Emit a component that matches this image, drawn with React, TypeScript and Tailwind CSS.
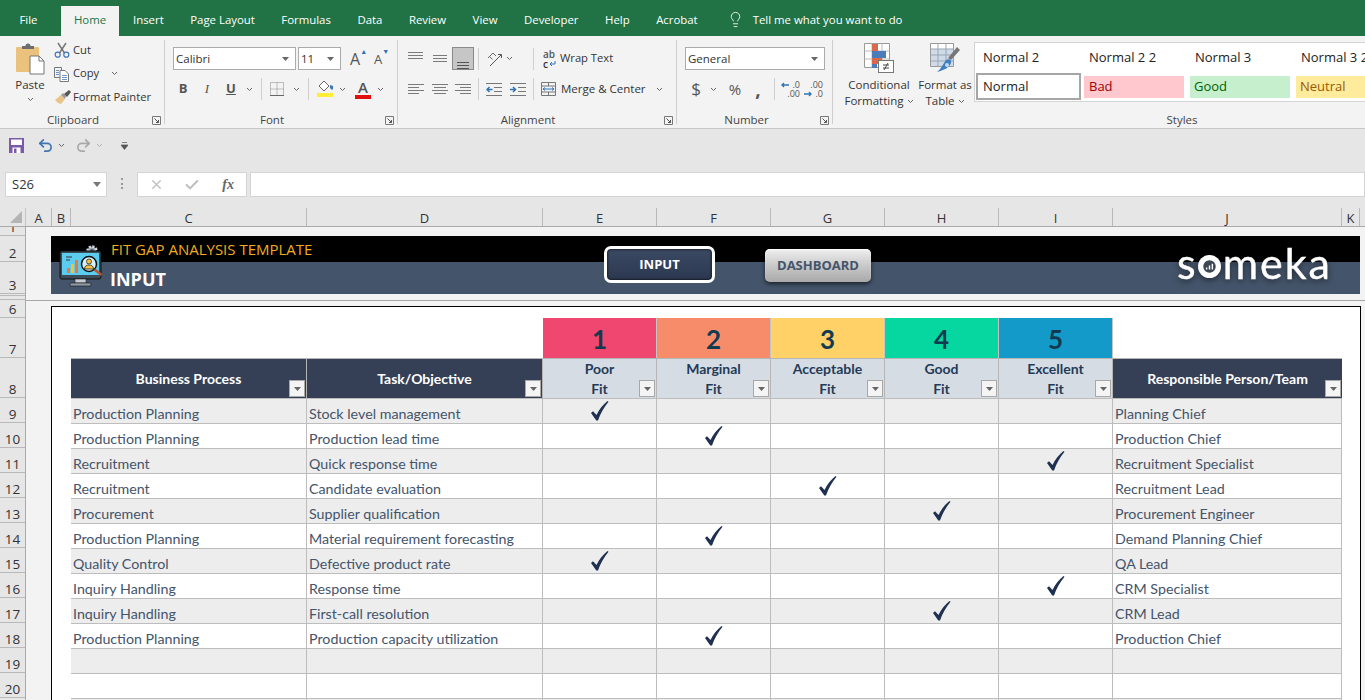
import React from "react";
import { Lightbulb, Undo2, Redo2, X, Check } from "lucide-react";

const tabs = ["Insert", "Page Layout", "Formulas", "Data", "Review", "View", "Developer", "Help", "Acrobat"];

const columns = [
  { name: "A", w: "w-[26px]" },
  { name: "B", w: "w-[19px]" },
  { name: "C", w: "w-[236px]" },
  { name: "D", w: "w-[236px]" },
  { name: "E", w: "w-[114px]" },
  { name: "F", w: "w-[114px]" },
  { name: "G", w: "w-[114px]" },
  { name: "H", w: "w-[114px]" },
  { name: "I", w: "w-[114px]" },
  { name: "J", w: "w-[229px]" },
  { name: "K", w: "w-[18px]" },
];

const tasks = [
  ["Production Planning", "Stock level management", 1, "Planning Chief"],
  ["Production Planning", "Production lead time", 2, "Production Chief"],
  ["Recruitment", "Quick response time", 5, "Recruitment Specialist"],
  ["Recruitment", "Candidate evaluation", 3, "Recruitment Lead"],
  ["Procurement", "Supplier qualification", 4, "Procurement Engineer"],
  ["Production Planning", "Material requirement forecasting", 2, "Demand Planning Chief"],
  ["Quality Control", "Defective product rate", 1, "QA Lead"],
  ["Inquiry Handling", "Response time", 5, "CRM Specialist"],
  ["Inquiry Handling", "First-call resolution", 4, "CRM Lead"],
  ["Production Planning", "Production capacity utilization", 2, "Production Chief"],
  ["", "", 0, ""],
  ["", "", 0, ""],
  ["", "", 0, ""],
] as const;

const fits = [
  { n: 1, top: "Poor", bg: "bg-[#ef476f]" },
  { n: 2, top: "Marginal", bg: "bg-[#f78c6b]" },
  { n: 3, top: "Acceptable", bg: "bg-[#ffd166]" },
  { n: 4, top: "Good", bg: "bg-[#06d6a0]" },
  { n: 5, top: "Excellent", bg: "bg-[#149ac9]" },
];

function Chevron({ className = "" }: { className?: string }) {
  return (
    <svg width="7" height="5" viewBox="0 0 7 5" className={"shrink-0 " + className}>
      <path d="M1 1l2.500 2.500L6 1" fill="none" stroke="#666" strokeWidth="1" />
    </svg>
  );
}

function Launcher() {
  return (
    <svg width="9" height="9" viewBox="0 0 9 9" className="absolute right-[3px] bottom-[3px]">
      <path d="M.5 8V.5H8.500V8.500H.5" fill="none" stroke="#777" />
      <path d="M2.500 2.500L6.500 6.500M6.500 4v2.500H4" fill="none" stroke="#555" />
    </svg>
  );
}

function Sep({ h = "h-[22px]" }: { h?: string }) {
  return <div className={"w-px shrink-0 bg-[#cfcfcf] " + h} />;
}

function Lines({ rows, active = false }: { rows: [number, number, number][]; active?: boolean }) {
  return (
    <svg width="16" height="14" viewBox="0 0 16 14">
      {rows.map(([a, b, y], i) => (
        <line key={i} x1={a} x2={b} y1={y + 0.5} y2={y + 0.5} stroke={active ? "#555" : "#7a7a7a"} />
      ))}
    </svg>
  );
}

function Select({ value, w }: { value: string; w: string }) {
  return (
    <div className={"flex h-[23px] items-center justify-between border border-[#ababab] bg-white pl-[2px] pr-[6px] text-[11.500px] text-[#333] " + w}>
      <span>{value}</span>
      <svg width="7" height="4" viewBox="0 0 7 4">
        <path d="M0 0h7L3.500 4z" fill="#666" />
      </svg>
    </div>
  );
}

function PasteIcon() {
  return (
    <svg width="30" height="32" viewBox="0 0 30 32">
      <rect x="1" y="4" width="23" height="25" rx="1" fill="#eac27e" />
      <path d="M7 5V3h3.500a2.500 2.500 0 015 0H19v3H7z" fill="#6d6d6d" />
      <path d="M15 13h9l5 5v13H15z" fill="#fff" stroke="#777" />
      <path d="M24 13v5h5" fill="none" stroke="#777" />
    </svg>
  );
}

function ScissorsIcon() {
  return (
    <svg width="16" height="16" viewBox="0 0 16 16">
      <path d="M4 1l6.500 10M12 1L5.500 11" stroke="#777" strokeWidth="1.500" fill="none" />
      <circle cx="3.700" cy="12.700" r="2.500" fill="none" stroke="#3f75b5" strokeWidth="1.200" />
      <circle cx="12.300" cy="12.700" r="2.500" fill="none" stroke="#3f75b5" strokeWidth="1.200" />
    </svg>
  );
}

function CopyIcon() {
  return (
    <svg width="16" height="16" viewBox="0 0 16 16" fill="none" stroke="#777">
      <path d="M.5 1.500h7v10h-7z" fill="#f3f3f3" />
      <path d="M6 4.500h5l3.500 3.500v7.500H6z" fill="#fff" />
      <path d="M2 4.500h3M2 6.500h3M2 8.500h3M8 9.500h5M8 11.500h5M8 13.500h5" stroke="#4a7ab5" strokeWidth=".8" />
    </svg>
  );
}

function BrushIcon() {
  return (
    <svg width="18" height="16" viewBox="0 0 18 16">
      <path d="M1 11l6-5 4 4-4 5-3-1z" fill="#e9c486" />
      <path d="M7 6l2-2 3 3-1 3z" fill="#999" />
      <path d="M10 5l5-4 2 2-4 5z" fill="#555" />
    </svg>
  );
}

function BordersIcon() {
  return (
    <svg width="14" height="14" viewBox="0 0 14 14" fill="none" stroke="#888" strokeDasharray="1 1">
      <path d="M.5.500h13v13H.5zM7 .5v13M.5 7h13" />
      <path d="M0 13.500h14" strokeDasharray="none" stroke="#666" />
    </svg>
  );
}

function FillIcon() {
  return (
    <svg width="17" height="18" viewBox="0 0 17 18">
      <path d="M7 1l5 5-5 5-5-5z" fill="#fff" stroke="#666" />
      <path d="M13 5l3 1v3l-1 1-2-2z" fill="#3f75b5" />
      <rect x="0" y="13" width="16" height="4" fill="#ffee33" />
    </svg>
  );
}

function OrientationIcon() {
  return (
    <svg width="16" height="16" viewBox="0 0 16 16" fill="none" stroke="#666">
      <path d="M2 7l5-5 3 3M3.500 5.500l3 3" />
      <path d="M4 15L15 4M12 3.500h3.500V7" stroke="#555" />
    </svg>
  );
}

function IndentIcon({ left = false }: { left?: boolean }) {
  return (
    <svg width="16" height="13" viewBox="0 0 16 13">
      <g stroke="#777">
        <line x1="0" x2="16" y1=".5" y2=".5" />
        <line x1="8" x2="16" y1="4.500" y2="4.500" />
        <line x1="8" x2="16" y1="8.500" y2="8.500" />
        <line x1="0" x2="16" y1="12.500" y2="12.500" />
      </g>
      <path d={left ? "M6.500 6.500H1M3.500 4L1 6.500 3.500 9" : "M0 6.500h5.500M3 4l2.500 2.500L3 9"} stroke="#2f73b7" strokeWidth="1.500" fill="none" />
    </svg>
  );
}

function WrapIcon() {
  return (
    <div className="relative flex h-[20px] w-[12px] flex-col text-[10px] font-semibold leading-[10px] text-[#555]">
      <span>ab</span>
      <span className="text-[#333]">c</span>
      <svg width="7" height="6" viewBox="0 0 7 6" className="absolute right-[-1px] bottom-[2px]">
        <path d="M6 0v3H1M3 1L1 3l2 2" fill="none" stroke="#2f73b7" />
      </svg>
    </div>
  );
}

function MergeIcon() {
  return (
    <svg width="15" height="14" viewBox="0 0 15 14" fill="none">
      <path d="M.5.500h14v13H.5zM.5 4h14M.5 10h14M7.500.5V4M7.500 10v4" stroke="#777" />
      <path d="M2 7h11M4 5.500L2 7l2 1.500M11 5.500L13 7l-2 1.500" stroke="#2f73b7" />
    </svg>
  );
}

function DecimalIcon({ top, bottom, up }: { top: string; bottom: string; up: boolean }) {
  return (
    <div className="relative flex h-[18px] w-[19px] flex-col items-end text-[9px] font-medium leading-[9px] text-[#555]">
      <span>{top}</span>
      <span>{bottom}</span>
      <svg width="8" height="6" viewBox="0 0 8 6" className={"absolute left-0 " + (up ? "top-[2px]" : "bottom-[1px]")}>
        <path d={up ? "M8 3H1M3 1L1 3l2 2" : "M0 3h7M5 1l2 2-2 2"} fill="none" stroke="#2f73b7" strokeWidth="1.300" />
      </svg>
    </div>
  );
}

function ConditionalIcon() {
  return (
    <svg width="30" height="30" viewBox="0 0 30 30">
      <path d="M.5.500h25v24H.5z" fill="#fff" stroke="#999" />
      <path d="M8 .5v24M18 .5v24M.5 8h25M.5 16h25" stroke="#bbb" />
      <rect x="8" y="1" width="6" height="7" fill="#d9694a" />
      <rect x="8" y="8" width="14" height="7" fill="#4a7db9" />
      <rect x="8" y="15" width="10" height="6" fill="#d9694a" />
      <rect x="8" y="21" width="5" height="4" fill="#4a7db9" />
      <rect x="14.500" y="17.500" width="15" height="12" fill="#fff" stroke="#777" />
      <path d="M19 22h6M19 25h6M24 20l-4 7" stroke="#444" fill="none" />
    </svg>
  );
}

function TableStyleIcon() {
  return (
    <svg width="30" height="30" viewBox="0 0 30 30">
      <path d="M.5.500h23v23H.5z" fill="#fff" stroke="#999" />
      <rect x="1" y="6" width="22" height="17" fill="#cfdbe8" />
      <path d="M8 .5v23M16 .5v23M.5 6h23M.5 12h23M.5 18h23" stroke="#9aa5b2" />
      <path d="M18 15l9-11 3 3-9 10z" fill="#777" />
      <path d="M16 17c3-2 6 0 5 3-2 5-7 7-14 9 4-3 6-8 9-12z" fill="#3e7fc1" />
      <circle cx="17" cy="22" r="2" fill="#fff" opacity=".7" />
    </svg>
  );
}

function SaveIcon() {
  return (
    <svg width="15" height="15" viewBox="0 0 15 15">
      <path d="M0 0h15v15H0z" fill="#7d5aa8" />
      <rect x="2" y="1.500" width="11" height="5.500" fill="#fff" />
      <rect x="3.500" y="9.500" width="8" height="5.500" fill="#fff" />
      <rect x="5" y="10.500" width="2.500" height="4.500" fill="#7d5aa8" />
    </svg>
  );
}

function MonitorLogo() {
  return (
    <svg width="46" height="44" viewBox="0 0 46 44">
      <circle cx="33" cy="7" r="4.500" fill="#9aa7b3" stroke="#d8dde2" strokeWidth="2.500" strokeDasharray="2 1.500" />
      <circle cx="33" cy="7" r="2" fill="#4d5965" />
      <rect x="1" y="7" width="41" height="28" rx="2" fill="#3d4a57" stroke="#111" />
      <rect x="3" y="9" width="37" height="22" fill="#5ccbf0" />
      <rect x="16" y="35" width="11" height="4" fill="#c6ccd2" stroke="#222" strokeWidth=".6" />
      <rect x="11" y="39" width="21" height="3" rx="1" fill="#8e99a4" stroke="#111" strokeWidth=".6" />
      <rect x="8" y="24" width="3" height="5" fill="#e8793a" />
      <rect x="12" y="20" width="3" height="9" fill="#f2c230" />
      <rect x="16" y="16" width="3" height="13" fill="#e8793a" />
      <path d="M7 13h6M7 16h4" stroke="#333" />
      <circle cx="30" cy="20" r="7.500" fill="#d4f1fb" stroke="#111" strokeWidth="1.500" />
      <circle cx="30" cy="17.500" r="2.500" fill="#f5c343" stroke="#111" strokeWidth=".7" />
      <path d="M25.500 25c0-3 2-4 4.500-4s4.500 1 4.500 4z" fill="#f5c343" stroke="#111" strokeWidth=".7" />
      <path d="M35.500 25.500l7 5.500" stroke="#b8552e" strokeWidth="2.500" />
    </svg>
  );
}

function CheckMark() {
  return (
    <svg width="18" height="20" viewBox="0 0 18 20">
      <path d="M0 12l2-1.800 3.500 3.800C8 8.500 12 3.500 16.500 0l1 .8C13 6 9.500 12.500 7 19.500H5.300z" fill="#1f3050" />
    </svg>
  );
}

function FilterButton() {
  return (
    <div className="absolute right-px bottom-[1px] flex h-[17px] w-[16px] items-center justify-center border border-[#a8a8a8] bg-[#f4f4f4]">
      <svg width="7" height="4" viewBox="0 0 7 4">
        <path d="M0 0h7L3.500 4z" fill="#666" />
      </svg>
    </div>
  );
}

function Group({ width, label, labelClass, children }: { width: string; label: string; labelClass: string; children: React.ReactNode }) {
  return (
    <div className={"relative flex h-full flex-col " + width}>
      <div className="flex-1 pt-[11px]">{children}</div>
      <div className={"h-[17px] text-center text-[11.500px] leading-[18px] text-[#444] " + labelClass}>{label}</div>
      <Launcher />
    </div>
  );
}

function TabBar() {
  return (
    <div className="flex h-[36px] items-end bg-[#217346] text-[11.400px] leading-[18px] text-white">
      <div className="flex h-[30px] w-[61px] items-start justify-center pr-[4px] pt-[5px]">File</div>
      <div className="flex h-[30px] w-[58px] items-start justify-center bg-[#f3f3f3] pt-[5px] text-[#217346]">Home</div>
      <div className="ml-[14px] flex h-[30px] items-start gap-[26.500px] pt-[5px]">
        {tabs.map((t) => (
          <span key={t}>{t}</span>
        ))}
      </div>
      <div className="ml-[29px] flex h-[30px] items-start pt-[5px]">
        <Lightbulb size={17} strokeWidth={1.2} />
        <span className="ml-[9px]">Tell me what you want to do</span>
      </div>
    </div>
  );
}

function Ribbon() {
  const left: [number, number, number][] = [[0, 16, 1], [0, 11, 4], [0, 16, 7], [0, 11, 10]];
  const center: [number, number, number][] = [[0, 16, 1], [2, 14, 4], [0, 16, 7], [2, 14, 10]];
  const right: [number, number, number][] = [[0, 16, 1], [5, 16, 4], [0, 16, 7], [5, 16, 10]];
  return (
    <div className="flex h-[93px] border-b border-[#c6c6c6] bg-[#f3f3f3] text-[11.500px] text-[#333]">
      {/* Clipboard */}
      <Group width="w-[164px]" label="Clipboard" labelClass="pr-[18px]">
        <div className="flex items-start">
          <div className="ml-[14px] mt-[-4px] flex w-[32px] flex-col items-center">
            <PasteIcon />
            <span className="mt-[2px] leading-[16px]">Paste</span>
            <Chevron className="mt-[4px]" />
          </div>
          <div className="ml-[8px] mt-[-7px] flex flex-col gap-[3.500px] text-[11.200px]">
            <div className="flex h-[20px] items-center gap-[1px]">
              <div className="w-[18px]"><ScissorsIcon /></div>
              <span>Cut</span>
            </div>
            <div className="flex h-[20px] items-center gap-[1px]">
              <div className="w-[18px]"><CopyIcon /></div>
              <span>Copy</span>
              <Chevron className="ml-[11px]" />
            </div>
            <div className="flex h-[20px] items-center gap-[1px]">
              <div className="w-[18px]"><BrushIcon /></div>
              <span>Format Painter</span>
            </div>
          </div>
        </div>
      </Group>
      <Sep h="mt-1 h-[84px] bg-[#c8c8c8]" />

      {/* Font */}
      <Group width="w-[232px]" label="Font" labelClass="pr-[18px]">
        <div className="flex items-center pl-[8px]">
          <Select value="Calibri" w="w-[123px]" />
          <Select value="11" w="ml-[2px] w-[43px]" />
          <div className="ml-[9px] flex w-[14px] items-start text-[16px] leading-[20px] text-[#555]">A<span className="mt-[-1px] text-[7px] leading-[8px] text-[#2f73b7]">▲</span></div>
          <div className="ml-[10px] flex w-[14px] items-start text-[13px] leading-[20px] text-[#555]">A<span className="mt-[-1px] text-[7px] leading-[8px] text-[#2f73b7]">▼</span></div>
        </div>
        <div className="mt-[8px] flex h-[22px] items-center pl-[6px] text-[#555]">
          <span className="w-[24px] text-center text-[13px] font-bold">B</span>
          <span className="w-[24px] text-center text-[13px] italic" style={{ fontFamily: "'Liberation Serif', serif" }}>I</span>
          <span className="w-[24px] text-center text-[13px] font-bold underline">U</span>
          <Chevron className="ml-[3px]" />
          <div className="ml-[8px]"><Sep /></div>
          <div className="ml-[8px]"><BordersIcon /></div>
          <Chevron className="ml-[9px]" />
          <div className="ml-[8px]"><Sep /></div>
          <div className="ml-[8px]"><FillIcon /></div>
          <Chevron className="ml-[5px]" />
          <div className="ml-[9px] flex w-[16px] flex-col items-center">
            <span className="text-[15px] font-semibold leading-[15px] text-[#555]">A</span>
            <div className="h-[4px] w-[16px] bg-[#e01010]" />
          </div>
          <Chevron className="ml-[6px]" />
        </div>
      </Group>
      <Sep h="mt-1 h-[84px] bg-[#c8c8c8]" />

      {/* Alignment */}
      <Group width="w-[278px]" label="Alignment" labelClass="pr-[18px]">
        <div className="flex h-[23px] items-center pl-[6px]">
          <div className="flex w-[24px] justify-center"><Lines rows={[[0, 15, 0], [0, 15, 3], [0, 15, 6]]} /></div>
          <div className="flex w-[24px] justify-center"><Lines rows={[[1, 15, 3], [1, 15, 6], [1, 15, 9]]} /></div>
          <div className="flex h-[23px] w-[22px] items-end justify-center border border-[#8a8a8a] bg-[#c6c6c6]"><Lines rows={[[2, 14, 7], [2, 14, 10], [2, 14, 13]]} active /></div>
          <div className="ml-[4px]"><Sep /></div>
          <div className="ml-[7px]"><OrientationIcon /></div>
          <Chevron className="ml-[4px]" />
          <div className="ml-[20px]"><Sep /></div>
          <div className="ml-[9px]"><WrapIcon /></div>
          <span className="ml-[5px] text-[11.200px]">Wrap Text</span>
        </div>
        <div className="mt-[8px] flex h-[22px] items-center pl-[6px]">
          <div className="mt-[2px] flex w-[24px] justify-center"><Lines rows={left} /></div>
          <div className="mt-[2px] flex w-[24px] justify-center"><Lines rows={center} /></div>
          <div className="mt-[2px] flex w-[22px] justify-center"><Lines rows={right} /></div>
          <div className="ml-[4px]"><Sep /></div>
          <div className="ml-[7px]"><IndentIcon left /></div>
          <div className="ml-[8px]"><IndentIcon /></div>
          <div className="ml-[7px]"><Sep /></div>
          <div className="ml-[7px]"><MergeIcon /></div>
          <span className="ml-[5px] w-[95px]">Merge &amp; Center</span>
          <Chevron />
        </div>
      </Group>
      <Sep h="mt-1 h-[84px] bg-[#c8c8c8]" />

      {/* Number */}
      <Group width="w-[155px]" label="Number" labelClass="pr-[16px]">
        <div className="pl-[8px]">
          <Select value="General" w="w-[140px]" />
        </div>
        <div className="mt-[8px] flex h-[22px] items-center pl-[11px] text-[#555]">
          <span className="w-[16px] text-center text-[17px]">$</span>
          <Chevron className="ml-[6px]" />
          <span className="ml-[9px] w-[18px] text-center text-[15px]">%</span>
          <span className="ml-[8px] w-[12px] text-center text-[19px] font-bold leading-[16px]">,</span>
          <div className="ml-[10px]"><Sep /></div>
          <div className="ml-[6px]"><DecimalIcon top=".0" bottom=".00" up /></div>
          <div className="ml-[4px]"><DecimalIcon top=".00" bottom=".0" up={false} /></div>
        </div>
      </Group>
      <Sep h="mt-1 h-[84px] bg-[#c8c8c8]" />

      {/* Conditional formatting / table */}
      <div className="flex w-[141px] pt-[7px] text-center leading-[16px]">
        <div className="ml-[8px] flex w-[76px] flex-col items-center">
          <ConditionalIcon />
          <span className="mt-[4px]">Conditional</span>
          <span className="flex items-center gap-[3px]">Formatting <Chevron /></span>
        </div>
        <div className="flex w-[56px] flex-col items-center">
          <TableStyleIcon />
          <span className="mt-[4px]">Format as</span>
          <span className="flex items-center gap-[3px]">Table <Chevron /></span>
        </div>
      </div>

      {/* Styles */}
      <div className="flex h-full flex-1 flex-col overflow-hidden pt-[6px]">
        <div className="h-[61px] border-y border-l border-[#d4d4d4] bg-white pl-[1px] text-[13px] text-[#222]">
          <div className="flex h-[30px] items-center">
            {["Normal 2", "Normal 2 2", "Normal 3", "Normal 3 2"].map((s) => (
              <span key={s} className="w-[106px] shrink-0 pl-[7px]">{s}</span>
            ))}
          </div>
          <div className="flex items-center">
            <div className="flex h-[27px] w-[105px] shrink-0 items-center border-2 border-[#a6a6a6] pl-[5px]">Normal</div>
            <div className="ml-[3px] flex h-[22px] w-[100px] shrink-0 items-center bg-[#ffc7ce] pl-[5px] text-[#9c0006]">Bad</div>
            <div className="ml-[6px] flex h-[22px] w-[100px] shrink-0 items-center bg-[#c6efce] pl-[4px] text-[#006100]">Good</div>
            <div className="ml-[6px] flex h-[22px] w-[100px] shrink-0 items-center bg-[#ffeb9c] pl-[4px] text-[#9c5700]">Neutral</div>
          </div>
        </div>
        <div className="mt-[9px] pl-[25px] text-center text-[11.500px] leading-[17px] text-[#444]">Styles</div>
      </div>
    </div>
  );
}

function Toolbar() {
  return (
    <>
      <div className="flex h-[33px] items-center pl-[9px]">
        <SaveIcon />
        <Undo2 size={17} strokeWidth={2.4} className="ml-[13px] text-[#3f75b5]" />
        <Chevron className="ml-[4px]" />
        <Redo2 size={17} strokeWidth={2.4} className="ml-[10px] text-[#a9a9a9]" />
        <Chevron className="ml-[4px] opacity-40" />
        <svg width="7" height="8" viewBox="0 0 7 8" className="ml-[18px]">
          <path d="M1 .5h5M0 3h7L3.500 7.500z" stroke="#555" fill="#555" strokeWidth=".7" />
        </svg>
      </div>
      <div className="flex h-[46px] items-start pt-[10px] text-[13px] text-[#333]">
        <div className="ml-[5px] flex h-[25px] w-[102px] items-center justify-between border border-[#d4d4d4] bg-white pl-[6px] pr-[5px]">
          <span>S26</span>
          <svg width="8" height="5" viewBox="0 0 8 5"><path d="M0 0h8L4 5z" fill="#777" /></svg>
        </div>
        <div className="ml-[14px] mt-[6px] flex h-[11px] w-[3px] flex-col justify-between">
          <div className="h-[2px] w-[2px] bg-[#999]" />
          <div className="h-[2px] w-[2px] bg-[#999]" />
          <div className="h-[2px] w-[2px] bg-[#999]" />
        </div>
        <div className="ml-[13px] flex h-[25px] w-[110px] items-center border border-[#d4d4d4] bg-white">
          <div className="flex w-[37px] justify-center"><X size={15} className="text-[#bdbdbd]" /></div>
          <div className="flex w-[36px] justify-center"><Check size={16} strokeWidth={3} className="text-[#bdbdbd]" /></div>
          <span className="w-[36px] text-center text-[14px] font-bold italic text-[#666]" style={{ fontFamily: "'Liberation Serif', serif" }}>fx</span>
        </div>
        <div className="ml-[3px] h-[25px] flex-1 border border-[#d4d4d4] bg-white" />
      </div>
    </>
  );
}

function ColumnHeaders() {
  return (
    <div className="flex h-[19px] border-b border-[#a9a9a9] text-[13px] leading-[20px] text-[#333]">
      <div className="flex w-[26px] items-end justify-end border-r border-[#c4c4c4] pb-[3px] pr-[3px]">
        <div className="h-0 w-0 border-b-[12px] border-l-[12px] border-b-[#b4b4b4] border-l-transparent" />
      </div>
      {columns.map((c) => (
        <div key={c.name} className={"border-r border-[#b9b9b9] text-center " + c.w}>{c.name}</div>
      ))}
    </div>
  );
}

const rowHeads = [
  { n: "1", h: "h-[9px]" },
  { n: "2", h: "h-[26px]" },
  { n: "3", h: "h-[32px]" },
  { n: "", h: "h-[2px]" },
  { n: "", h: "h-[4px]" },
  { n: "6", h: "h-[18px]" },
  { n: "7", h: "h-[40px]" },
  { n: "8", h: "h-[40px]" },
  ...[9, 10, 11, 12, 13, 14, 15, 16, 17, 18, 19, 20, 21].map((n) => ({ n: String(n), h: "h-[25px]" })),
];

function RowHeaders() {
  return (
    <div className="w-[26px] shrink-0 border-r border-[#a9a9a9]">
      {rowHeads.map((r, i) => (
        <div key={i} className={"flex items-end justify-center overflow-hidden border-b border-[#b9b9b9] text-[13.500px] leading-[16px] text-[#333] " + r.h}>
          {r.n}
        </div>
      ))}
    </div>
  );
}

function Banner() {
  return (
    <div className="relative ml-[25px] w-[1309px] text-white">
      <div className="h-[26px] bg-black pl-[60px] text-[15px] leading-[26px] text-[#f0ad1c]">FIT GAP ANALYSIS TEMPLATE</div>
      <div className="h-[32px] bg-[#44546a] pl-[59px] text-[18px] font-bold leading-[34px]">INPUT</div>

      <div className="absolute left-[8px] top-[8px]"><MonitorLogo /></div>
      <div className="absolute left-[553px] top-[10px] flex h-[37px] w-[111px] items-center justify-center rounded-[7px] border-[3px] border-white bg-gradient-to-b from-[#3b4963] to-[#2c3850] pt-[1px] text-[13px] font-bold text-white shadow-[inset_0_0_3px_#000]">INPUT</div>
      <div className="absolute left-[714px] top-[13px] flex h-[33px] w-[106px] items-center justify-center rounded-[5px] bg-gradient-to-b from-[#f0f0f0] via-[#c9c9c9] to-[#a9a9a9] text-[13px] font-bold text-[#44546a] shadow-[0_2px_4px_rgba(0,0,0,0.6),inset_0_1px_1px_#fff]">DASHBOARD</div>
      <div className="absolute left-[1126px] top-[2px] flex h-[50px] items-center text-[43px] font-normal tracking-[2px] text-white [-webkit-text-stroke:0.4px_white] drop-shadow-[0_2px_3px_rgba(0,0,0,0.5)]" style={{ fontFamily: "Lato, sans-serif" }}>
        <span>s</span>
        <svg width="23" height="23" viewBox="0 0 24 24" className="mr-[2px] mt-[7px]">
          <circle cx="12" cy="12" r="12" fill="#fff" />
          <circle cx="12" cy="12" r="6.500" fill="#3d4653" />
          <path d="M9 15v-2M12 15v-4M15 15V9" stroke="#fff" strokeWidth="1.500" />
        </svg>
        <span>meka</span>
      </div>
    </div>
  );
}

function TaskTable() {
  return (
    <div className="ml-[25px] w-[1310px] border-x border-t border-black bg-white pl-[19px] pt-[11px]" style={{ fontFamily: "Lato, sans-serif" }}>
      <div className="grid grid-cols-[236px_236px_repeat(5,114px)_229px] grid-rows-[40px_40px] auto-rows-[25px]">
        {/* score row */}
        <div className="col-span-2" />
        {fits.map((f) => (
          <div key={f.n} className={"flex items-center justify-center border-r border-[#c4c4c4] pt-[2px] text-[26px] font-bold text-[#123a50] " + f.bg}>
            {f.n}
          </div>
        ))}
        <div />

        {/* headers */}
        {["Business Process", "Task/Objective"].map((h) => (
          <div key={h} className="relative flex items-center justify-center border-r border-t border-[#b5b5b5] bg-[#354057] text-[14px] font-bold text-white">
            {h}
            <FilterButton />
          </div>
        ))}
        {fits.map((f) => (
          <div key={f.n} className="relative flex flex-col items-center justify-center border-r border-t border-[#b5b5b5] bg-[#d6dce4] text-[14px] font-bold leading-[20px] text-[#1f3b57]">
            <span>{f.top}</span>
            <span>Fit</span>
            <FilterButton />
          </div>
        ))}
        <div className="relative flex items-center justify-center border-t border-[#b5b5b5] bg-[#354057] text-[14px] font-bold text-white">
          Responsible Person/Team
          <FilterButton />
        </div>

        {/* rows */}
        {tasks.map((t, i) => {
          const bg = i % 2 === 0 ? "bg-[#ededed]" : "bg-white";
          const cell = "h-[25px] border-r border-t border-[#bdbdbd] " + bg;
          const text = " overflow-hidden whitespace-nowrap pl-[2px] pt-[4px] text-[14.250px] leading-[22px] text-[#44546a]";
          return (
            <React.Fragment key={i}>
              <div className={cell + text}>{t[0]}</div>
              <div className={cell + text}>{t[1]}</div>
              {fits.map((f) => (
                <div key={f.n} className={cell + " flex items-center justify-center"}>
                  {t[2] === f.n && <CheckMark />}
                </div>
              ))}
              <div className={cell + text}>{t[3]}</div>
            </React.Fragment>
          );
        })}
      </div>
    </div>
  );
}

export default function App() {
  return (
    <div className="flex h-[700px] w-[1365px] flex-col overflow-hidden bg-[#e6e6e6]" style={{ fontFamily: "'Open Sans', sans-serif" }}>
      <TabBar />
      <Ribbon />
      <Toolbar />
      <ColumnHeaders />
      <div className="flex flex-1 overflow-hidden">
        <RowHeaders />
        <div className="flex-1 bg-[#f3f3f3] pt-[9px]">
          <Banner />
          <div className="mt-[6px] h-px bg-[#a8a8a8]" />
          <div className="h-[5px]" />
          <TaskTable />
        </div>
      </div>
    </div>
  );
}
